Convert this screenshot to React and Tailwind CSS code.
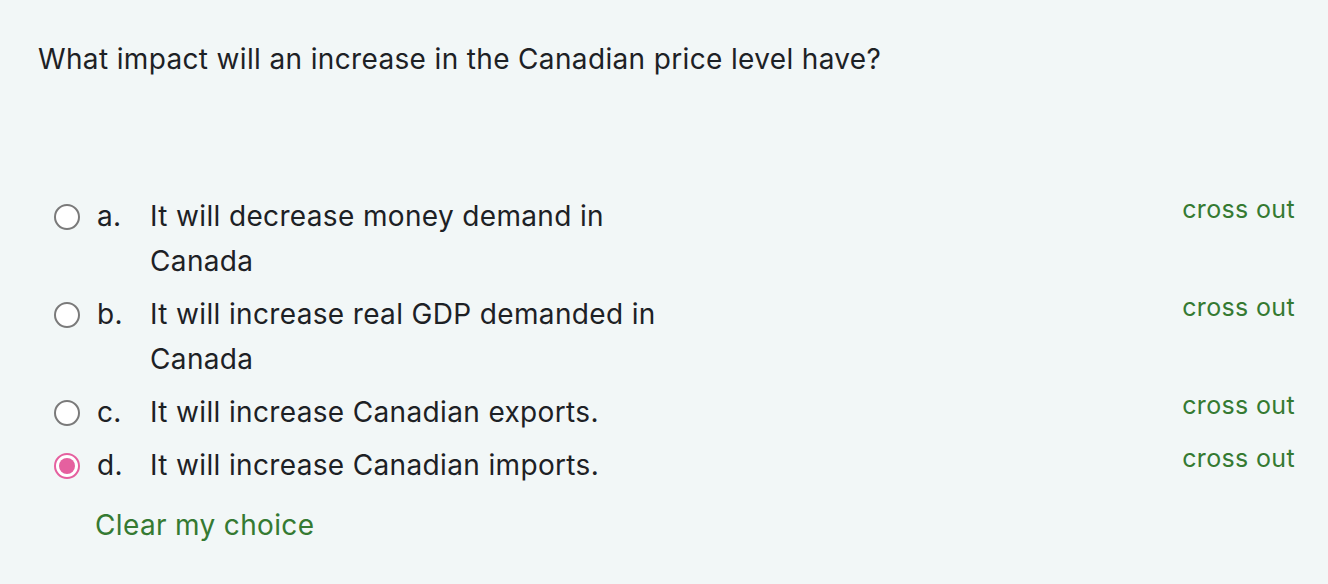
import React from "react";

const options = [
  { letter: "a.", text: "It will decrease money demand in Canada" },
  { letter: "b.", text: "It will increase real GDP demanded in Canada" },
  { letter: "c.", text: "It will increase Canadian exports." },
  { letter: "d.", text: "It will increase Canadian imports.", checked: true },
];

function Radio({ checked }) {
  if (checked) {
    return (
      <span className="flex h-[26px] w-[26px] shrink-0 items-center justify-center rounded-full border-[2px] border-[#e5609f] bg-white">
        <span className="h-[16px] w-[16px] rounded-full bg-[#e5609f]" />
      </span>
    );
  }
  return (
    <span className="h-[26px] w-[26px] shrink-0 rounded-full border-[2px] border-[#7a7a7a] bg-white" />
  );
}

export default function App() {
  return (
    <div
      className="min-h-[584px] w-[1328px] bg-[#f2f7f7] text-[#1d2125] tracking-[0.35px]"
      style={{ fontFamily: "Inter, 'Noto Sans', sans-serif" }}
    >
      <div className="pl-[38px] pr-[33px] pt-[39px]">
        <p className="text-[28px] leading-[40px]">
          What impact will an increase in the Canadian price level have?
        </p>
        <div className="mt-[111px] flex flex-col">
          {options.map((o) => (
            <div key={o.letter} className="flex items-start justify-between py-[4px] pl-[16px]">
              <div className="flex items-start">
                <div className="flex h-[45px] items-center">
                  <Radio checked={o.checked} />
                </div>
                <span className="ml-[17px] w-[53px] shrink-0 text-[28px] leading-[45px]">{o.letter}</span>
                <span className="max-w-[530px] text-[28px] leading-[45px]">{o.text}</span>
              </div>
              <span className="text-[25px] leading-[31px] text-[#357a32]">cross out</span>
            </div>
          ))}
          <div className="mt-[11px] pl-[57px] text-[28px] leading-[45px] text-[#357a32]">
            Clear my choice
          </div>
        </div>
      </div>
    </div>
  );
}
